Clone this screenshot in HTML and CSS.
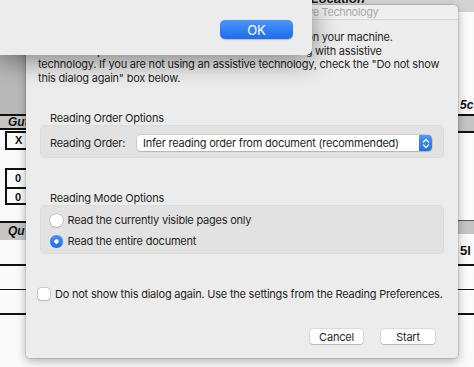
FILE: index.html
```html
<!DOCTYPE html>
<html lang="en">
<head>
<meta charset="utf-8">
<title>Reading Untagged Document</title>
<link rel="stylesheet" href="styles.css">
</head>
<body>
<div class="screen">
  <div class="doc">
    <div class="doc-col doc-left">
      <div class="doc-shade"></div>
      <div class="thead thead-gut">Gut</div>
      <div class="cell cell-x">X</div>
      <div class="cell-pair"><div class="pair-cell">0</div><div class="pair-cell">0</div></div>
      <div class="thead thead-q">Qu</div>
      <div class="rule rule-a"></div>
      <div class="rule rule-b"></div>
      <div class="rule rule-c"></div>
    </div>
    <div class="doc-mid">
      <div class="doc-band"><span class="band-text">Correct Location</span></div>
    </div>
    <div class="doc-col doc-right">
      <div class="doc-band"></div>
      <div class="num num-5c">5c</div>
      <div class="rhead"></div>
      <div class="rhead2"></div>
      <div class="num num-5l">5l</div>
      <div class="rule rule-a2"></div>
      <div class="rule rule-b"></div>
      <div class="rule rule-c"></div>
    </div>
  </div>

  <div class="dialog">
    <div class="titlebar">Reading Untagged Document With Assistive Technology</div>
    <div class="dialog-body">
      <p class="intro">Assistive software such as a screen reader is running on your machine.<br>Select the options below that are best suited to reading with assistive<br>technology. If you are not using an assistive technology, check the "Do not show<br>this dialog again" box below.</p>

      <div class="group-label group-label-order">Reading Order Options</div>
      <div class="group group-order">
        <span class="field-label">Reading Order:</span>
        <div class="popup">
          <span class="popup-text">Infer reading order from document (recommended)</span>
          <span class="stepper">
            <svg width="8" height="11" viewBox="0 0 8 11"><path d="M1.5 4 L4 1.5 L6.5 4 M1.5 7 L4 9.5 L6.5 7" fill="none" stroke="#fff" stroke-width="1.3" stroke-linecap="round" stroke-linejoin="round"/></svg>
          </span>
        </div>
      </div>

      <div class="group-label group-label-mode">Reading Mode Options</div>
      <div class="group group-mode">
        <label class="radio-row"><span class="radio"></span>Read the currently visible pages only</label>
        <label class="radio-row"><span class="radio radio-on"></span>Read the entire document</label>
      </div>

      <label class="check-row"><span class="checkbox"></span>Do not show this dialog again. Use the settings from the Reading Preferences.</label>

      <div class="buttons">
        <button class="btn btn-cancel">Cancel</button>
        <button class="btn btn-start">Start</button>
      </div>
    </div>
  </div>

  <div class="sheet">
    <button class="ok">OK</button>
  </div>
</div>
</body>
</html>
```

FILE: styles.css
```css
* { box-sizing: border-box; }
html, body { margin: 0; padding: 0; }
body { background: #fff; }

.screen {
  position: relative;
  width: 474px;
  height: 367px;
  overflow: hidden;
  background: #fafafa;
  font-family: "Inter", "Noto Sans", sans-serif;
  color: #262626;
}

/* background document */
.doc {
  display: grid;
  grid-template-columns: 26px 1fr 16px;
  height: 100%;
}
.doc-col { overflow: hidden; display: flex; flex-direction: column; }
.doc-shade { height: 114px; background: #b9b9b9; flex: none; }
.thead {
  flex: none;
  font-family: "Liberation Sans", sans-serif;
  font-weight: bold;
  font-style: italic;
  font-size: 12px;
  color: #111;
  background: #c6c6c6;
  white-space: nowrap;
  padding-left: 8px;
}
.thead-gut {
  height: 16px;
  line-height: 12px;
  border-top: 2px solid #111;
  border-bottom: 2px solid #111;
}
.thead-q {
  margin-top: 16px;
  height: 19px;
  line-height: 17px;
  border-top: 2px solid #111;
}
.cell {
  flex: none;
  width: 40px;
  margin-left: 5px;
  font-family: "Liberation Sans", sans-serif;
  font-weight: bold;
  font-size: 11px;
  color: #111;
  padding-left: 8px;
}
.cell-x {
  margin-top: 1px;
  height: 19px;
  line-height: 15px;
  border: 2px solid #111;
}
.cell-pair {
  flex: none;
  margin-top: 18px;
  margin-left: 5px;
  width: 40px;
  border: 2px solid #111;
  font-family: "Liberation Sans", sans-serif;
  font-weight: bold;
  font-size: 11px;
  color: #111;
}
.pair-cell { height: 16.5px; line-height: 16px; padding-left: 8px; }
.pair-cell + .pair-cell { border-top: 2px solid #111; }
.rule { flex: none; height: 1px; background: #111; }
.rule-a { margin-top: 24px; height: 1.5px; }
.rule-b { margin-top: 23px; }
.rule-c { margin-top: 23px; height: 2px; }

.doc-mid { overflow: hidden; }
.doc-band {
  flex: none;
  height: 12px;
  background: #d3d3d3;
  overflow: hidden;
}
.doc-mid .doc-band { text-align: right; padding-right: 93px; }
.band-text {
  display: block;
  margin-top: -8px;
  font-family: "Liberation Sans", sans-serif;
  font-weight: bold;
  font-style: italic;
  font-size: 13px;
  line-height: 14px;
  color: #1a1a1a;
}
.num {
  flex: none;
  font-family: "Liberation Sans", sans-serif;
  font-weight: bold;
  font-size: 12px;
  color: #111;
  padding-left: 2px;
  white-space: nowrap;
}
.num-5c { margin-top: 86px; font-style: italic; height: 14px; line-height: 14px; }
.rhead {
  flex: none;
  margin-top: 2px;
  height: 19px;
  background: #c4c4c4;
  border-top: 2px solid #111;
  border-bottom: 2px solid #111;
}
.rhead2 {
  flex: none;
  margin-top: 87px;
  height: 14px;
  background: #c4c4c4;
  border-top: 1px solid #555;
}
.num-5l { margin-top: 10px; height: 14px; line-height: 14px; font-size: 13px; }
.rule-a2 { margin-top: 6px; height: 1.5px; }

/* dialog window */
.dialog {
  position: absolute;
  left: 26px;
  top: 5px;
  width: 432px;
  height: 353px;
  background: #ececec;
  border-radius: 5px 5px 4px 4px;
  box-shadow: 0 0 0 0.5px rgba(0,0,0,0.2), 0 3px 10px rgba(0,0,0,0.3);
  font-size: 11px;
  letter-spacing: -0.22px;
  display: flex;
  flex-direction: column;
}
.titlebar {
  flex: none;
  height: 15px;
  line-height: 14px;
  text-align: center;
  color: #ababab;
  font-size: 11px;
  letter-spacing: -0.4px;
  background: #efefef;
  border-bottom: 1px solid #d6d6d6;
  border-radius: 5px 5px 0 0;
  white-space: nowrap;
  overflow: hidden;
}
.dialog-body {
  flex: 1;
  display: flex;
  flex-direction: column;
  padding: 0 14px 0 12px;
}
.intro {
  margin: 11px 0 0 0;
  line-height: 13.5px;
  white-space: nowrap;
}
.group-label {
  line-height: 14px;
  padding-left: 12px;
}
.group-label-order { margin-top: 26px; }
.group-label-mode { margin-top: 33px; }
.group {
  margin-left: 2px;
  background: #e2e2e2;
  border-radius: 5px;
  box-shadow: inset 0 0 0 0.5px rgba(0,0,0,0.05);
}
.group-order {
  height: 33px;
  padding: 10px 12px 7px 10px;
  display: flex;
  align-items: center;
}
.field-label { width: 87px; flex: none; }
.popup {
  flex: 1;
  height: 16px;
  background: #fff;
  border-radius: 4px;
  box-shadow: 0 0 0 0.5px rgba(0,0,0,0.18), 0 1px 1px rgba(0,0,0,0.12);
  display: flex;
  align-items: center;
  padding-left: 6px;
}
.popup-text { flex: 1; white-space: nowrap; }
.stepper {
  flex: none;
  width: 13px;
  height: 16px;
  border-radius: 0 4px 4px 0;
  background: linear-gradient(#4f97f8, #1f6ff0);
  display: flex;
  align-items: center;
  justify-content: center;
}
.group-mode {
  padding: 9px 10px 6px 10px;
  display: flex;
  flex-direction: column;
  gap: 8px;
}
.radio-row, .check-row {
  display: flex;
  align-items: center;
  line-height: 13px;
  height: 13px;
  white-space: nowrap;
}
.radio {
  flex: none;
  width: 12.5px;
  height: 12.5px;
  border-radius: 50%;
  background: #fff;
  box-shadow: 0 0 0 0.5px rgba(0,0,0,0.25), 0 1px 1px rgba(0,0,0,0.12);
  margin-right: 5px;
}
.radio-on {
  background: radial-gradient(circle, #fff 0 2px, transparent 2.4px), linear-gradient(#4b93f8, #1d6cf0);
  box-shadow: none;
}
.check-row { margin-top: 33px; height: 14px; }
.checkbox {
  flex: none;
  width: 12px;
  height: 12px;
  border-radius: 3px;
  background: #fff;
  box-shadow: 0 0 0 0.5px rgba(0,0,0,0.3), 0 1px 1px rgba(0,0,0,0.1);
  margin-right: 5px;
}
.buttons {
  margin-top: 28px;
  display: flex;
  justify-content: flex-end;
  gap: 18px;
  padding-right: 9px;
}
.btn {
  font: inherit;
  letter-spacing: inherit;
  color: #262626;
  height: 15px;
  line-height: 14px;
  padding: 0;
  border: none;
  background: #fff;
  border-radius: 3px;
  box-shadow: 0 0 0 0.5px rgba(0,0,0,0.15), 0 1px 1px rgba(0,0,0,0.15);
}
.btn-cancel { width: 53px; }
.btn-start { width: 54px; }

/* alert sheet over everything */
.sheet {
  position: absolute;
  left: 0;
  top: 0;
  width: 312px;
  height: 55px;
  background: #ececec;
  border-radius: 0 0 6px 0;
  box-shadow: 0 6px 26px rgba(0,0,0,0.45);
  display: flex;
  justify-content: flex-end;
  align-items: flex-start;
  padding: 20px 19px 0 0;
}
.ok {
  font-family: "Inter", "Noto Sans", sans-serif;
  font-size: 13px;
  color: #fff;
  width: 73px;
  height: 19px;
  line-height: 18px;
  padding: 0;
  border: none;
  border-radius: 5px;
  background: linear-gradient(#4c95f9, #1a6df0);
  box-shadow: 0 0.5px 1px rgba(0,0,0,0.2);
}
```
